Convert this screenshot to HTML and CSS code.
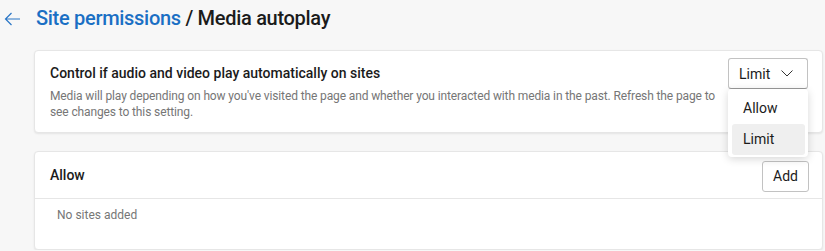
FILE: index.html
```html
<!DOCTYPE html>
<html lang="en">
<head>
    <meta charset="UTF-8">
    <meta name="viewport" content="width=device-width, initial-scale=1.0">
    <title>Media autoplay</title>
    <link rel="stylesheet" href="styles.css">
</head>
<body>
    <div class="header">
        <svg class="back" width="17" height="14" viewBox="0 0 17 14">
            <path d="M16 7H1.5M7.5 1L1.5 7l6 6" fill="none" stroke="#2a76c6" stroke-width="1.2"/>
        </svg>
        <h1><span class="crumb">Site permissions</span> / Media autoplay</h1>
    </div>

    <div class="content">
        <div class="card setting">
            <div class="setting-text">
                <div class="setting-title">Control if audio and video play automatically on sites</div>
                <div class="setting-desc">Media will play depending on how you've visited the page and whether you interacted with media in the past. Refresh the page to see changes to this setting.</div>
            </div>
            <div class="dropdown">
                <button class="select">Limit
                    <svg width="12" height="7" viewBox="0 0 12 7">
                        <path d="M0.5 0.5L6 6l5.5-5.5" fill="none" stroke="#333" stroke-width="1"/>
                    </svg>
                </button>
                <div class="menu">
                    <div class="menu-item">Allow</div>
                    <div class="menu-item selected">Limit</div>
                </div>
            </div>
        </div>

        <div class="card list">
            <div class="list-head">
                <h2>Allow</h2>
                <button class="add">Add</button>
            </div>
            <div class="empty">No sites added</div>
        </div>
    </div>
</body>
</html>
```

FILE: styles.css
```css
body {
    margin: 0;
    background-color: #f7f7f7;
    font-family: Roboto, "Noto Sans", sans-serif;
    color: #1b1b1b;
}
.header {
    display: flex;
    align-items: center;
    padding: 4px 0 0 4px;
    margin-bottom: 18px;
}
.back {
    margin-top: 1px;
}
h1 {
    margin: 0 0 0 15px;
    font-size: 20px;
    line-height: 28px;
    font-weight: 500;
    letter-spacing: -0.3px;
}
.crumb {
    color: #1a6fc4;
}
.content {
    padding: 0 2px 0 34px;
}
.card {
    background-color: #fff;
    border: 1px solid #e6e6e6;
    border-radius: 4px;
    box-shadow: 0 1px 2px rgba(0, 0, 0, 0.08);
}
.setting {
    display: flex;
    align-items: flex-start;
    padding: 12px 14px 12px 15px;
}
.setting-text {
    flex: 1;
    padding-right: 4px;
}
.setting-title {
    font-size: 14px;
    line-height: 20px;
    font-weight: 500;
}
.setting-desc {
    margin-top: 5px;
    font-size: 12px;
    line-height: 16px;
    letter-spacing: -0.12px;
    color: #767676;
}
.dropdown {
    position: relative;
    margin-top: -5px;
}
.select {
    display: flex;
    align-items: center;
    justify-content: space-between;
    width: 80px;
    height: 31px;
    padding: 0 14px 0 10px;
    background-color: #fff;
    border: 1px solid #c2c2c2;
    border-bottom-color: #9a9a9a;
    border-radius: 3px;
    font-family: inherit;
    font-size: 14px;
    color: #1b1b1b;
}
.menu {
    position: absolute;
    top: 31px;
    left: 0;
    width: 80px;
    box-sizing: border-box;
    padding: 4px 3px 2px 4px;
    background-color: #fff;
    border-radius: 4px;
    box-shadow: 0 2px 8px rgba(0, 0, 0, 0.16);
    z-index: 2;
}
.menu-item {
    height: 31px;
    line-height: 31px;
    padding-left: 11px;
    font-size: 14px;
    border-radius: 3px;
}
.menu-item.selected {
    background-color: #efefef;
}
.list {
    margin-top: 18px;
}
.list-head {
    display: flex;
    align-items: center;
    justify-content: space-between;
    height: 46px;
    padding: 0 13px 0 15px;
    border-bottom: 1px solid #e6e6e6;
}
h2 {
    margin: 0;
    font-size: 14px;
    font-weight: 500;
}
.add {
    height: 31px;
    padding: 0 10px;
    background-color: #fff;
    border: 1px solid #c2c2c2;
    border-radius: 3px;
    font-family: inherit;
    font-size: 14px;
    color: #1b1b1b;
    margin-top: 2px;
}
.empty {
    padding: 8px 22px 26px;
    font-size: 12px;
    line-height: 16px;
    color: #767676;
}
```
